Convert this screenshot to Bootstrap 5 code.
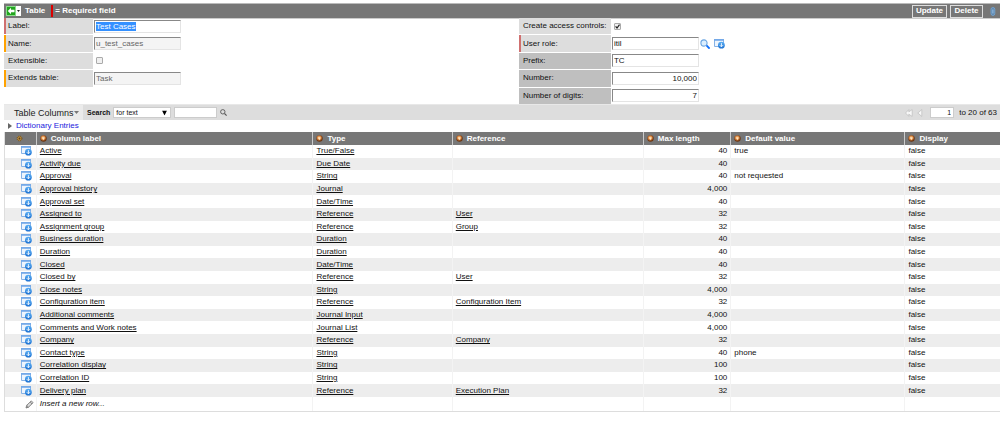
<!DOCTYPE html>
<html lang="en">
<head>
<meta charset="utf-8">
<meta name="viewport" content="width=device-width, initial-scale=1">
<title>Table - Test Cases</title>
<link rel="stylesheet" href="https://cdn.jsdelivr.net/npm/bootstrap@5.3.0/dist/css/bootstrap.min.css">
<style>
  body { font: 8px/12px "Liberation Sans", Arial, sans-serif; color: #111; background: #fff; }
  svg { display: block; flex: none; }
  .title-bar { background: #777; color: #fff; height: 14px; font-weight: bold; box-shadow: 0 -1px #bbb, 0 1px #ccc; padding-left: 2px; }
  .title-bar .btn { --bs-btn-padding-x: 3px; --bs-btn-padding-y: 0px; --bs-btn-font-size: 8px; --bs-btn-line-height: 10px; --bs-btn-color: #fff; --bs-btn-border-color: #ddd; --bs-btn-border-radius: 0; --bs-btn-font-weight: bold; height: 13px; min-width: 33px; font-family: inherit; margin-right: 3px; }
  .back { background: #23a51f; border: 1px solid #8d8; width: 10px; height: 10px; padding: 0; }
  .back-menu { background: #fff; border: 0; width: 5px; height: 10px; padding: 0; }
  .req-mark { width: 2px; height: 12px; background: #d00; margin: 0 2px 0 6px; }
  .form-area { margin-bottom: 1px; }
  .form-left { width: 51.7%; }
  .fields { display: grid; grid-template-rows: repeat(5, 1fr); gap: 1px; height: 86px; }
  .field-name { width: 89px; background: #ddd; padding-left: 4px; display: flex; align-items: center; align-self: stretch; white-space: nowrap; }
  .form-right .field-name { width: 92px; }
  .form-right .dim { background: #bfbfbf; }
  .field-name.must { border-left: 2px solid #d07070; padding-left: 2px; }
  .field-name.fixed { border-left: 2px solid #ffa200; padding-left: 2px; }
  .text-field { width: 87px; height: 13px; min-height: 0; font-size: 8px; line-height: 11px; padding: 0 1px; border: 1px solid #e4e4e4; border-top: 1px solid #888; border-left: 1px solid #888; border-radius: 0; background: #fff; color: #111; margin-left: 1px; }
  .text-field:read-only { background: #f4f4f4; color: #666; }
  .text-field:focus { outline: 0; box-shadow: none; border-color: #888 #e4e4e4 #e4e4e4 #888; }
  .text-field::selection { background: #3390ff; color: #fff; }
  .tick { appearance: none; width: 7px; height: 7px; margin: 0 0 0 3px; border: 1px solid #aaa; border-radius: 1px; background: #f0f0f0; }
  .tick:checked { background: #f0f0f0 url("data:image/svg+xml,%3Csvg xmlns='http://www.w3.org/2000/svg' viewBox='0 0 5 5'%3E%3Cpath d='M.6 2.4L2 4 4.5.7' fill='none' stroke='%23222' stroke-width='1.2'/%3E%3C/svg%3E") center/contain no-repeat; }
  .list-bar { background: #ddd; height: 15px; box-shadow: 0 -1px #e8e8e8; }
  .list-name { background: #ebebeb; border: 0; width: 79px; padding: 0 4px 0 10px; font-size: 9px; color: #222; white-space: nowrap; }
  .search-label { margin: 0 3px 0 4px; font-size: 7px; }
  .tool { font-size: 7px; line-height: 9px; border-radius: 0; border: 1px solid #ccc; background-color: #fff; height: 11px; padding: 0 2px; color: #111; }
  .search-kind { width: 58px; appearance: none; padding-right: 10px; }
  .search-text { width: 43px; margin: 0 3px; }
  .page-from { width: 24px; margin: 0 5px 0 7px; }
  .pager { padding-right: 3px; }
  .section-link { color: #22d; text-decoration: none; height: 12px; }
  .records { table-layout: fixed; height: 280px; --bs-table-bg: transparent; border-left: 1px solid #ddd; border-bottom: 1px solid #ddd; border-collapse: separate; border-spacing: 0; color: #111; }
  .records > :not(caption) > * > * { padding: 0 3px; border: 0; border-right: 1px solid #f3f3f3; vertical-align: middle; white-space: nowrap; color: inherit; box-shadow: none; line-height: 12px; }
  .records > thead > tr > th { background: #777; color: #fff; height: 13px; border-right-color: #ccc; }
  .records > * > tr > *:last-child { border-right: 0; }
  .records > tbody > tr:nth-child(even) { background: #ededed; }
  .records td a { color: #111; text-decoration: underline; }
  .records .new-row { height: 14px; }
  .records .open-icon { padding-left: 16px !important; }
  .gear { margin-left: 8px; }
</style>
</head>
<body>
<svg width="0" height="0" class="position-absolute" aria-hidden="true">
  <defs>
    <linearGradient id="blue" x1="0" y1="0" x2="0" y2="1"><stop offset="0" stop-color="#5cb0f5"/><stop offset="1" stop-color="#1b6fd0"/></linearGradient>
    <radialGradient id="amber" cx=".45" cy=".4"><stop offset="0" stop-color="#ffd9a0"/><stop offset=".6" stop-color="#d8823c"/><stop offset="1" stop-color="#6b3410"/></radialGradient>
  </defs>
  <symbol id="open" viewBox="0 0 11 10">
    <path d="M.5 .5h9v7h-9z" fill="#eef5fd" stroke="#86b2e6"/><path d="M0 0h10v1.8H0z" fill="#74a9e8"/>
    <circle cx="7.4" cy="6.2" r="3.4" fill="url(#blue)"/><path d="M7.4 4.2v3.4M5.8 6.2l1.6 1.6L9 6.2" fill="none" stroke="#fff" stroke-width=".9"/>
  </symbol>
  <symbol id="ball" viewBox="0 0 7 7"><circle cx="3.5" cy="3.5" r="3.2" fill="url(#amber)"/><path d="M1.8 2.6h3L3.6 5z" fill="#ffe3bd"/></symbol>
  <symbol id="gear" viewBox="0 0 7 7"><circle cx="3.5" cy="3.5" r="2.4" fill="#b98a3a" stroke="#6b4a14" stroke-dasharray="1 .8"/><circle cx="3.5" cy="3.5" r=".9" fill="#5a4020"/></symbol>
  <symbol id="lens" viewBox="0 0 10 10"><path d="M6.2 6.2L9 9" stroke="currentColor" stroke-width="1.8" stroke-linecap="round"/><circle cx="4" cy="4" r="3.1" fill="#dcefff" stroke="#6aa5e2" stroke-width="1.1"/></symbol>
  <symbol id="pencil" viewBox="0 0 9 9"><path d="M1 8l.7-2.6L6.3.9l1.8 1.8-4.6 4.5zM5.2 2L7 3.8M1.7 5.4l1.8 1.8" fill="#ddd" stroke="#666" stroke-width=".8"/></symbol>
  <symbol id="first" viewBox="0 0 8 8"><path d="M3.8 .6L.6 4l3.2 3.4V5.2L7.2 7.4V.6L3.8 2.8z" fill="#f8f8f8" stroke="#bbb" stroke-width=".7"/></symbol>
  <symbol id="prev" viewBox="0 0 6 8"><path d="M4.8 .6L.8 4l4 3.4z" fill="#f8f8f8" stroke="#bbb" stroke-width=".7"/></symbol>
</svg>

<main class="ps-1 pt-1">
  <header class="title-bar d-flex align-items-center">
    <button class="back" aria-label="Back"><svg width="8" height="8" viewBox="0 0 8 8"><path d="M4 .8L.8 4 4 7.2V5.2h3.5V2.8H4z" fill="#fff"/></svg></button>
    <button class="back-menu" aria-label="Back menu"><svg width="5" height="10" viewBox="0 0 5 10"><path d="M1 4h3L2.5 6z" fill="#222"/></svg></button>
    <span class="ms-1 ps-0">Table</span>
    <span class="req-mark"></span><span>= Required field</span>
    <div class="ms-auto d-flex align-items-center">
      <button class="btn">Update</button><button class="btn">Delete</button>
      <svg width="6" height="9" viewBox="0 0 7 9" class="mx-1" preserveAspectRatio="none"><path d="M1.2 2.3v4.2a2.2 2 0 004.4 0V2.3a2.2 1.8 0 00-4.4 0" fill="#5f89b0" stroke="#74a3cf" stroke-width="1"/><path d="M3.4 2.5v4" stroke="#a9cdee" stroke-width=".9"/></svg>
    </div>
  </header>

  <form class="form-area d-flex" onsubmit="return false">
    <div class="form-left fields">
      <div class="d-flex align-items-center"><label class="field-name must" for="label">Label:</label><input id="label" class="form-control text-field" value="Test Cases"></div>
      <div class="d-flex align-items-center"><label class="field-name fixed" for="name">Name:</label><input id="name" class="form-control text-field" value="u_test_cases" readonly></div>
      <div class="d-flex align-items-center"><label class="field-name" for="ext">Extensible:</label><input id="ext" type="checkbox" class="tick"></div>
      <div class="d-flex align-items-center"><label class="field-name fixed" for="parent">Extends table:</label><input id="parent" class="form-control text-field" value="Task" readonly></div>
    </div>
    <div class="form-right fields">
      <div class="d-flex align-items-center"><label class="field-name" for="acl">Create access controls:</label><input id="acl" type="checkbox" class="tick" checked></div>
      <div class="d-flex align-items-center"><label class="field-name must" for="role">User role:</label><input id="role" class="form-control text-field" value="itil">
        <svg width="10" height="10" class="lookup text-primary" style="margin-left:1px"><use href="#lens"/></svg><svg width="11" height="10" class="ms-1"><use href="#open"/></svg></div>
      <div class="d-flex align-items-center"><label class="field-name dim" for="prefix">Prefix:</label><input id="prefix" class="form-control text-field" value="TC"></div>
      <div class="d-flex align-items-center"><label class="field-name dim" for="num">Number:</label><input id="num" class="form-control text-field text-end" value="10,000"></div>
      <div class="d-flex align-items-center"><label class="field-name dim" for="digits">Number of digits:</label><input id="digits" class="form-control text-field text-end" value="7"></div>
    </div>
  </form>

  <div class="list-bar d-flex align-items-center">
    <button class="list-name d-flex align-items-center justify-content-between align-self-stretch">Table Columns <svg width="5" height="3" viewBox="0 0 5 3"><path d="M0 0h5L2.5 3z" fill="#777"/></svg></button>
    <label class="search-label fw-bold" for="kind">Search</label>
    <div class="position-relative d-flex">
      <select id="kind" class="tool search-kind"><option>for text</option></select>
      <svg class="position-absolute top-50 end-0 translate-middle-y me-1 pe-none" width="5" height="5" viewBox="0 0 5 5"><path d="M0 0h5L2.5 5z" fill="#000"/></svg>
    </div>
    <input class="tool search-text" aria-label="Search text">
    <svg width="7" height="7" viewBox="0 0 7 7"><circle cx="2.8" cy="2.8" r="2.2" fill="none" stroke="#555" stroke-width=".9"/><path d="M4.5 4.5L6.6 6.6" stroke="#555" stroke-width="1.1"/></svg>
    <div class="pager ms-auto d-flex align-items-center">
      <svg width="8" height="8"><use href="#first"/></svg><svg width="6" height="8" class="ms-1"><use href="#prev"/></svg>
      <input class="tool page-from text-end" aria-label="First row" value="1"><span>to 20 of 63</span>
    </div>
  </div>

  <a href="#" class="section-link d-flex align-items-center ps-1"><svg width="4" height="6" viewBox="0 0 4 6" class="me-1"><path d="M0 0l4 3-4 3z" fill="#666"/></svg>Dictionary Entries</a>

  <table class="table records mb-0">
    <colgroup><col style="width:3.2%"><col style="width:27.8%"><col style="width:14%"><col style="width:19.2%"><col style="width:8.8%"><col style="width:17.5%"><col></colgroup>
    <thead><tr id="heads"><th><svg width="7" height="7" class="gear"><use href="#gear"/></svg></th></tr></thead>
    <tbody id="rows"></tbody>
  </table>
</main>

<script src="https://cdn.jsdelivr.net/npm/bootstrap@5.3.0/dist/js/bootstrap.bundle.min.js"></script>
<script>
  const heads = ['Column label', 'Type', 'Reference', 'Max length', 'Default value', 'Display'];
  const rows = [
    ['Active', 'True/False', '', '40', 'true'],
    ['Activity due', 'Due Date', '', '40', ''],
    ['Approval', 'String', '', '40', 'not requested'],
    ['Approval history', 'Journal', '', '4,000', ''],
    ['Approval set', 'Date/Time', '', '40', ''],
    ['Assigned to', 'Reference', 'User', '32', ''],
    ['Assignment group', 'Reference', 'Group', '32', ''],
    ['Business duration', 'Duration', '', '40', ''],
    ['Duration', 'Duration', '', '40', ''],
    ['Closed', 'Date/Time', '', '40', ''],
    ['Closed by', 'Reference', 'User', '32', ''],
    ['Close notes', 'String', '', '4,000', ''],
    ['Configuration item', 'Reference', 'Configuration Item', '32', ''],
    ['Additional comments', 'Journal Input', '', '4,000', ''],
    ['Comments and Work notes', 'Journal List', '', '4,000', ''],
    ['Company', 'Reference', 'Company', '32', ''],
    ['Contact type', 'String', '', '40', 'phone'],
    ['Correlation display', 'String', '', '100', ''],
    ['Correlation ID', 'String', '', '100', ''],
    ['Delivery plan', 'Reference', 'Execution Plan', '32', '']
  ];
  const link = t => t ? `<a href="#">${t}</a>` : '';
  document.getElementById('heads').insertAdjacentHTML('beforeend', heads.map(h =>
    `<th><span class="d-flex align-items-center gap-1"><svg width="7" height="7"><use href="#ball"/></svg>${h}</span></th>`).join(''));
  document.getElementById('rows').innerHTML = rows.map(r =>
    `<tr><td class="open-icon"><svg width="11" height="10"><use href="#open"/></svg></td><td>${link(r[0])}</td><td>${link(r[1])}</td><td>${link(r[2])}</td><td class="text-end">${r[3]}</td><td>${r[4]}</td><td>false</td></tr>`).join('') +
    `<tr class="new-row"><td class="open-icon"><svg width="9" height="9" class="ms-1"><use href="#pencil"/></svg></td><td class="fst-italic">Insert a new row...</td><td></td><td></td><td></td><td></td><td></td></tr>`;
  const label = document.getElementById('label');
  label.focus();
  label.select();
</script>
</body>
</html>
